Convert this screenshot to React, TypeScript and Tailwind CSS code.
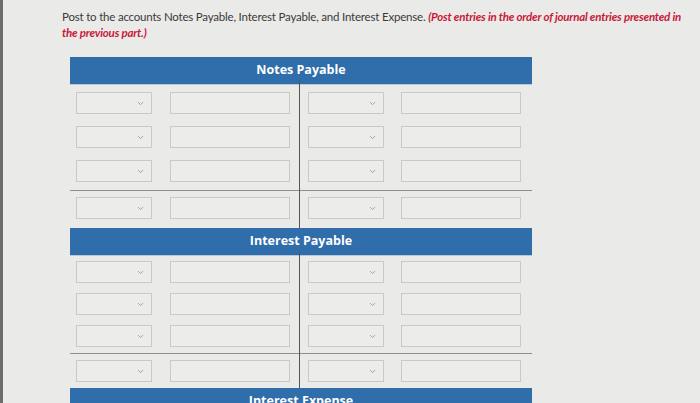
import { ChevronDown } from 'lucide-react'

function Select() {
  return (
    <div className="w-[76px] h-[22px] border border-[#c9c9c6] bg-[#ececea] flex items-center justify-end pr-[6px]">
      <ChevronDown className="w-[9px] h-[9px] text-[#8a8a88]" strokeWidth={2} />
    </div>
  )
}

function Amount() {
  return <div className="w-[120px] h-[22px] border border-[#c9c9c6] bg-[#ececea]" />
}

function Row({ divider, tight }: { divider?: boolean; tight?: boolean }) {
  const pad = divider ? 'border-t border-[#8f8f8d] pt-[6px]' : tight ? 'pt-[10px]' : 'pt-[12px]'
  return (
    <div className={`flex ${pad}`}>
      <div className="w-[229px] flex gap-[18px] pl-[6px]">
        <Select />
        <Amount />
      </div>
      <div className="w-[229px] flex gap-[17px] pl-[9px]">
        <Select />
        <Amount />
      </div>
    </div>
  )
}

function Account({ title, tight }: { title: string; tight?: boolean }) {
  return (
    <div>
      <div className="h-[27px] bg-[#2f6dab] flex items-center justify-center text-white font-bold text-[12.5px] font-['Open_Sans',sans-serif] shadow-[0_1px_0_#b8c8d8]">
        {title}
      </div>
      <div className={`relative ${tight ? 'pb-[6px]' : 'pb-[9px]'}`}>
        <div className="absolute left-[229px] top-0 bottom-0 w-px bg-[#555553]" />
        <div className="-mt-[4px]">
          <Row tight={tight} />
          <Row tight={tight} />
          <Row tight={tight} />
          <div className={tight ? 'mt-[6px]' : 'mt-[8px]'}>
            <Row divider />
          </div>
        </div>
      </div>
    </div>
  )
}

export default function App() {
  return (
    <div className="w-[700px] h-[403px] overflow-hidden bg-[#eaeae8] border-l-[3px] border-[#6d6d6b] font-['Lato',sans-serif]">
      <p className="pl-[59px] pr-[2px] pt-[9px] text-[11.5px] leading-[16px] text-[#3a3a3a] tracking-[-0.2px]">
        Post to the accounts Notes Payable, Interest Payable, and Interest Expense.{' '}
        <span className="text-[#c8193a] font-bold italic">
          (Post entries in the order of journal entries presented in the previous part.)
        </span>
      </p>
      <div className="ml-[67px] mt-[16px] w-[462px] flex flex-col">
        <Account title="Notes Payable" />
        <Account title="Interest Payable" tight />
        <Account title="Interest Expense" />
      </div>
    </div>
  )
}
